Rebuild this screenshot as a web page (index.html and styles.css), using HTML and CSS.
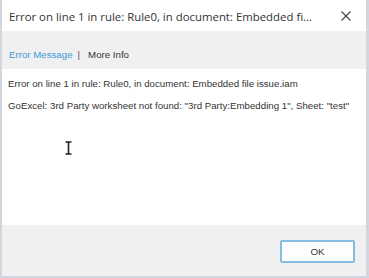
FILE: index.html
```html
<!DOCTYPE html>
<html>
<head>
<meta charset="utf-8">
<link rel="stylesheet" href="styles.css">
</head>
<body>
<div class="window">
  <div class="titlebar">
    <span class="title">Error on line 1 in rule: Rule0, in document: Embedded fi...</span>
    <svg class="close" width="10" height="10" viewBox="0 0 10 10"><path d="M0.5 0.5L9.5 9.5M9.5 0.5L0.5 9.5" stroke="#444" stroke-width="1.1" fill="none"/></svg>
  </div>
  <div class="tabs">
    <span class="tab active">Error Message</span>
    <span class="sep">|</span>
    <span class="tab">More Info</span>
  </div>
  <div class="content">
    <p class="line">Error on line 1 in rule: Rule0, in document: Embedded file issue.iam</p>
    <p class="line">GoExcel: 3rd Party worksheet not found: "3rd Party:Embedding 1", Sheet: "test"</p>
    <svg class="cursor" width="7" height="14" viewBox="0 0 7 14"><path d="M0.5 1H6.5M3.5 1V13M0.5 13H6.5" stroke="#222" stroke-width="1.6" fill="none"/></svg>
  </div>
  <div class="footer">
    <button class="ok">OK</button>
  </div>
</div>
</body>
</html>
```
FILE: styles.css
```css
html, body {
  margin: 0;
  padding: 0;
  background: #ffffff;
}
.window {
  width: 369px;
  height: 278px;
  box-sizing: border-box;
  border-left: 2px solid #cfd8e1;
  border-right: 3px solid #cfd8e1;
  border-bottom: 2px solid #cfd8e1;
  display: flex;
  flex-direction: column;
  overflow: hidden;
}
.titlebar {
  height: 31px;
  flex: none;
  background: #ffffff;
  display: flex;
  align-items: center;
  padding-left: 7px;
  padding-right: 15px;
  box-sizing: border-box;
}
.title {
  font-family: "Open Sans", sans-serif;
  font-size: 11.4px;
  color: #333333;
  flex: 1;
  white-space: nowrap;
  padding-top: 1px;
}
.close {
  flex: none;
}
.tabs {
  height: 38px;
  flex: none;
  background: #f0f0f0;
  display: flex;
  align-items: center;
  padding-left: 7px;
  padding-top: 9px;
  box-sizing: border-box;
  font-family: "Liberation Sans", Arial, sans-serif;
  font-size: 9.7px;
  color: #333;
}
.tab.active {
  color: #3a9bd6;
}
.sep {
  margin: 0 8px 0 5px;
  color: #555;
}
.content {
  flex: 1;
  background: #ffffff;
  padding: 4px 6px 0;
  position: relative;
  font-family: "Liberation Sans", Arial, sans-serif;
  font-size: 9.7px;
  color: #333;
}
.line {
  margin: 0;
  height: 22px;
  line-height: 22px;
  white-space: nowrap;
}
.cursor {
  position: absolute;
  left: 63px;
  top: 72px;
}
.footer {
  height: 51px;
  flex: none;
  background: #f0f0f0;
  display: flex;
  justify-content: flex-end;
  align-items: flex-start;
  padding-top: 15px;
  padding-right: 11px;
  box-sizing: border-box;
}
.ok {
  width: 75px;
  height: 23px;
  box-sizing: border-box;
  border: 2px solid #86bddf;
  border-radius: 2px;
  background: #fdfdfd;
  font-family: "Liberation Sans", Arial, sans-serif;
  font-size: 9.7px;
  color: #333;
  padding: 0;
  margin: 0;
}
```
